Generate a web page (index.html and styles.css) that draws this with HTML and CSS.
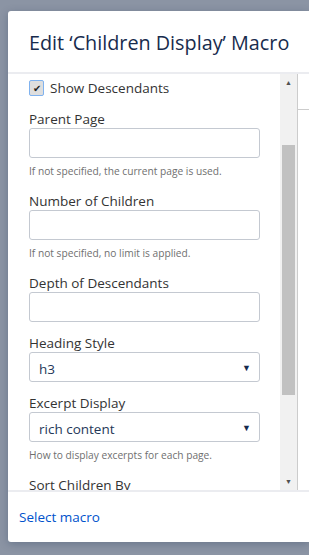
FILE: index.html
```html
<!DOCTYPE html>
<html lang="en">
  <head>
    <meta charset="UTF-8" />
    <meta name="viewport" content="width=device-width, initial-scale=1.0" />
    <title>Edit Macro</title>
    <link rel="stylesheet" href="styles.css">
  </head>
  <body>
    <div class="dialog">
      <div class="dialog-header">
        <h2>Edit ‘Children Display’ Macro</h2>
      </div>

      <div class="dialog-body">
        <div class="params">
          <div class="params-scroll">
            <div class="check-row">
              <span class="checkbox">&#10004;</span>
              <span>Show Descendants</span>
            </div>

            <div class="field">
              <label>Parent Page</label>
              <div class="input"></div>
              <div class="help">If not specified, the current page is used.</div>
            </div>

            <div class="field">
              <label>Number of Children</label>
              <div class="input"></div>
              <div class="help">If not specified, no limit is applied.</div>
            </div>

            <div class="field">
              <label>Depth of Descendants</label>
              <div class="input"></div>
            </div>

            <div class="field">
              <label>Heading Style</label>
              <div class="input select">h3<span class="caret">&#9660;</span></div>
            </div>

            <div class="field">
              <label>Excerpt Display</label>
              <div class="input select">rich content<span class="caret">&#9660;</span></div>
              <div class="help">How to display excerpts for each page.</div>
            </div>

            <div class="field">
              <label>Sort Children By</label>
            </div>
          </div>

          <div class="scrollbar">
            <span class="arrow">&#9650;</span>
            <div class="track"><div class="thumb"></div></div>
            <span class="arrow">&#9660;</span>
          </div>
        </div>

        <div class="preview">
          <div class="preview-head"></div>
        </div>
      </div>

      <div class="dialog-footer">
        <a href="#">Select macro</a>
      </div>
    </div>
  </body>
</html>
```

FILE: styles.css
```css
body {
  margin: 0;
  height: 555px;
  overflow: hidden;
  background-color: #8b94a4;
  font-family: "Open Sans", "Noto Sans", sans-serif;
}
.dialog {
  margin: 11px 0 0 8px;
  width: 301px;
  height: 531px;
  background: white;
  border-radius: 3px 0 0 3px;
  box-shadow: 0 2px 8px rgba(9, 30, 66, 0.25);
  display: flex;
  flex-direction: column;
  overflow: hidden;
}
.dialog-header {
  height: 61px;
  padding-left: 21px;
  border-bottom: 2px solid #ebecf0;
  display: flex;
  align-items: center;
}
.dialog-header h2 {
  margin: 0;
  padding-top: 2px;
  font-size: 19.8px;
  font-weight: 500;
  color: #172b4d;
  white-space: nowrap;
}
.dialog-body {
  height: 416px;
  display: flex;
}
.params {
  width: 289px;
  flex-shrink: 0;
  display: flex;
  border-right: 1px solid #cccccc;
}
.params-scroll {
  width: 251px;
  padding: 4px 0 0 21px;
  overflow: hidden;
  color: #333333;
  font-size: 13px;
}
.check-row {
  height: 20px;
  display: flex;
  align-items: center;
  gap: 6px;
  margin-bottom: 10px;
  font-size: 13.5px;
}
.checkbox {
  width: 13px;
  height: 14px;
  border: 1px solid #7fb2ef;
  border-radius: 2px;
  background: #dedede;
  font-size: 10px;
  line-height: 14px;
  text-align: center;
  color: #222;
}
.field {
  margin-bottom: 10px;
}
label {
  display: block;
  line-height: 20px;
  padding-top: 1px;
  height: 19px;
  font-size: 13.5px;
}
.input {
  width: 229px;
  height: 28px;
  border: 1px solid #c4c9d1;
  border-radius: 3px;
}
.select {
  position: relative;
  padding: 2px 0 0 9px;
  width: 220px;
  height: 26px;
  line-height: 28px;
  font-size: 13.5px;
  color: #253858;
}
.caret {
  position: absolute;
  right: 8px;
  top: 1px;
  font-size: 9px;
  color: #172b4d;
}
.help {
  margin-top: 5px;
  line-height: 17px;
  font-size: 10.2px;
  color: #6f6f6f;
}
.scrollbar {
  width: 17px;
  background: #f1f1f1;
  display: flex;
  flex-direction: column;
  align-items: center;
}
.arrow {
  height: 17px;
  line-height: 17px;
  font-size: 7px;
  color: #505050;
}
.track {
  flex: 1;
  width: 100%;
  padding-top: 54px;
}
.thumb {
  width: 13px;
  height: 250px;
  margin: 0 auto;
  background: #c1c1c1;
}
.preview {
  flex: 1;
}
.preview-head {
  height: 35px;
  border-bottom: 1px solid #cccccc;
}
.dialog-footer {
  flex: 1;
  border-top: 2px solid #ebecf0;
  padding-left: 11px;
  display: flex;
  align-items: center;
}
.dialog-footer a {
  color: #0052cc;
  text-decoration: none;
  font-size: 13.5px;
}
```
